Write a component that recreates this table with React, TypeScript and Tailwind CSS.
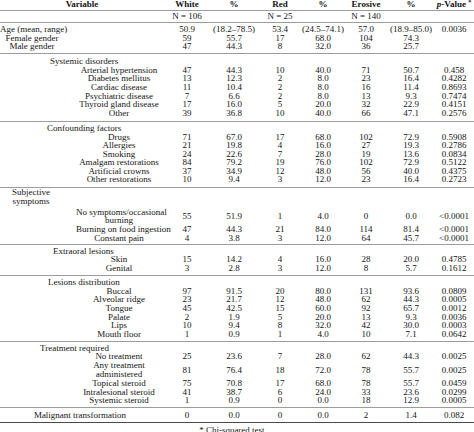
import React from "react";

type Vals = [string, string, string, string, string, string, string];

type Row =
  | { kind: "group"; label: string; pad: string }
  | { kind: "sub"; label: React.ReactNode; vals: Vals; tall?: boolean }
  | { kind: "top"; label: string; vals: Vals }
  | { kind: "wide"; label: string; vals: Vals }
  | { kind: "stack"; label: React.ReactNode };

const GRID = "grid grid-cols-[164px_46px_48px_44px_42px_44px_46px_40px] items-center";

const BLOCKS: { h: string; last?: boolean; rows: Row[] }[] = [
  {
    h: "h-[31px]",
    rows: [
      { kind: "top", label: "Age (mean, range)", vals: ["50.9", "(18.2–78.5)", "53.4", "(24.5–74.1)", "57.0", "(18.9–85.0)", "0.0036"] },
      { kind: "top", label: "Female gender", vals: ["59", "55.7", "17", "68.0", "104", "74.3", ""] },
      { kind: "top", label: "Male gender", vals: ["47", "44.3", "8", "32.0", "36", "25.7", ""] },
    ],
  },
  {
    h: "h-[67.5px]",
    rows: [
      { kind: "group", label: "Systemic disorders", pad: "pl-[50px]" },
      { kind: "sub", label: "Arterial hypertension", vals: ["47", "44.3", "10", "40.0", "71", "50.7", "0.458"] },
      { kind: "sub", label: "Diabetes mellitus", vals: ["13", "12.3", "2", "8.0", "23", "16.4", "0.4282"] },
      { kind: "sub", label: "Cardiac disease", vals: ["11", "10.4", "2", "8.0", "16", "11.4", "0.8693"] },
      { kind: "sub", label: "Psychiatric disease", vals: ["7", "6.6", "2", "8.0", "13", "9.3", "0.7474"] },
      { kind: "sub", label: "Thyroid gland disease", vals: ["17", "16.0", "5", "20.0", "32", "22.9", "0.4151"] },
      { kind: "sub", label: "Other", vals: ["39", "36.8", "10", "40.0", "66", "47.1", "0.2576"] },
    ],
  },
  {
    h: "h-[66px]",
    rows: [
      { kind: "group", label: "Confounding factors", pad: "pl-[47px]" },
      { kind: "sub", label: "Drugs", vals: ["71", "67.0", "17", "68.0", "102", "72.9", "0.5908"] },
      { kind: "sub", label: "Allergies", vals: ["21", "19.8", "4", "16.0", "27", "19.3", "0.2786"] },
      { kind: "sub", label: "Smoking", vals: ["24", "22.6", "7", "28.0", "19", "13.6", "0.0834"] },
      { kind: "sub", label: "Amalgam restorations", vals: ["84", "79.2", "19", "76.0", "102", "72.9", "0.5122"] },
      { kind: "sub", label: "Artificial crowns", vals: ["37", "34.9", "12", "48.0", "56", "40.0", "0.4375"] },
      { kind: "sub", label: "Other restorations", vals: ["10", "9.4", "3", "12.0", "23", "16.4", "0.2723"] },
    ],
  },
  {
    h: "h-[57px]",
    rows: [
      { kind: "stack", label: <>Subjective<br />symptoms</> },
      {
        kind: "sub",
        tall: true,
        label: <>No symptoms/occasional<br />burning</>,
        vals: ["55", "51.9", "1", "4.0", "0", "0.0", "<0.0001"],
      },
      { kind: "sub", label: "Burning on food ingestion", vals: ["47", "44.3", "21", "84.0", "114", "81.4", "<0.0001"] },
      { kind: "sub", label: "Constant pain", vals: ["4", "3.8", "3", "12.0", "64", "45.7", "<0.0001"] },
    ],
  },
  {
    h: "h-[31.5px]",
    rows: [
      { kind: "group", label: "Extraoral lesions", pad: "pl-[53px]" },
      { kind: "sub", label: "Skin", vals: ["15", "14.2", "4", "16.0", "28", "20.0", "0.4785"] },
      { kind: "sub", label: "Genital", vals: ["3", "2.8", "3", "12.0", "8", "5.7", "0.1612"] },
    ],
  },
  {
    h: "h-[65.5px]",
    rows: [
      { kind: "group", label: "Lesions distribution", pad: "pl-[48px]" },
      { kind: "sub", label: "Buccal", vals: ["97", "91.5", "20", "80.0", "131", "93.6", "0.0809"] },
      { kind: "sub", label: "Alveolar ridge", vals: ["23", "21.7", "12", "48.0", "62", "44.3", "0.0005"] },
      { kind: "sub", label: "Tongue", vals: ["45", "42.5", "15", "60.0", "92", "65.7", "0.0012"] },
      { kind: "sub", label: "Palate", vals: ["2", "1.9", "5", "20.0", "13", "9.3", "0.0036"] },
      { kind: "sub", label: "Lips", vals: ["10", "9.4", "8", "32.0", "42", "30.0", "0.0003"] },
      { kind: "sub", label: "Mouth floor", vals: ["1", "0.9", "1", "4.0", "10", "7.1", "0.0642"] },
    ],
  },
  {
    h: "h-[66.5px]",
    rows: [
      { kind: "group", label: "Treatment required", pad: "pl-[40px]" },
      { kind: "sub", label: "No treatment", vals: ["25", "23.6", "7", "28.0", "62", "44.3", "0.0025"] },
      {
        kind: "sub",
        tall: true,
        label: <>Any treatment<br />administered</>,
        vals: ["81", "76.4", "18", "72.0", "78", "55.7", "0.0025"],
      },
      { kind: "sub", label: "Topical steroid", vals: ["75", "70.8", "17", "68.0", "78", "55.7", "0.0459"] },
      { kind: "sub", label: "Intralesional steroid", vals: ["41", "38.7", "6", "24.0", "33", "23.6", "0.0299"] },
      { kind: "sub", label: "Systemic steroid", vals: ["1", "0.9", "0", "0.0", "18", "12.9", "0.0005"] },
    ],
  },
  {
    h: "h-[15px]",
    last: true,
    rows: [{ kind: "wide", label: "Malignant transformation", vals: ["0", "0.0", "0", "0.0", "2", "1.4", "0.082"] }],
  },
];

function Cells({ vals }: { vals: Vals }) {
  return (
    <>
      {vals.map((v, i) => (
        <div key={i} className="text-center whitespace-nowrap">
          {v}
        </div>
      ))}
    </>
  );
}

function TableRow({ row }: { row: Row }) {
  if (row.kind === "group") {
    return <div className={"whitespace-nowrap leading-[8.6px] " + row.pad}>{row.label}</div>;
  }
  if (row.kind === "stack") {
    return <div className="mb-[1.5px] w-[62px] text-center leading-[8.6px]">{row.label}</div>;
  }
  const labelClass =
    row.kind === "top"
      ? "pr-[100px] text-center"
      : row.kind === "wide"
        ? "pr-[4px] text-center"
        : "pl-[76px] pr-[2px] text-center";
  return (
    <div className={GRID + (row.kind === "sub" && row.tall ? " leading-[8.6px] my-[0.5px]" : " leading-[8.6px]")}>
      <div className={"whitespace-nowrap " + labelClass}>{row.label}</div>
      <Cells vals={row.vals} />
    </div>
  );
}

export default function App() {
  return (
    <div className="h-[432px] w-[474px] overflow-hidden bg-white text-[9px] text-[#141414] [font-family:'Liberation_Serif',serif]">
      {/* column heads */}
      <div className={GRID + " h-[11px] border-b border-[#9c9c9c] pb-[1.5px] font-bold leading-[8.6px]"}>
        <div className="text-center">Variable</div>
        <div className="text-center">White</div>
        <div className="text-center">%</div>
        <div className="text-center">Red</div>
        <div className="text-center">%</div>
        <div className="text-center">Erosive</div>
        <div className="text-center">%</div>
        <div className="whitespace-nowrap text-center">
          <span className="italic">p</span>-Value <sup className="text-[6px]">*</sup>
        </div>
      </div>
      <div className={GRID + " h-[12px] border-b border-[#9c9c9c] leading-[8.6px]"}>
        <div />
        <div className="text-center whitespace-nowrap">N = 106</div>
        <div />
        <div className="text-center whitespace-nowrap">N = 25</div>
        <div />
        <div className="text-center whitespace-nowrap">N = 140</div>
        <div />
        <div />
      </div>

      {BLOCKS.map((b, i) => (
        <div
          key={i}
          className={
            "flex flex-col justify-center " +
            b.h +
            (b.last ? " border-b-[1.5px] border-[#4a4a4a]" : " border-b border-[#9c9c9c]")
          }
        >
          {b.rows.map((r, j) => (
            <TableRow key={j} row={r} />
          ))}
        </div>
      ))}

      <p className="mt-[2.5px] pr-[8px] text-center leading-[8.6px]">* Chi-squared test.</p>
    </div>
  );
}
